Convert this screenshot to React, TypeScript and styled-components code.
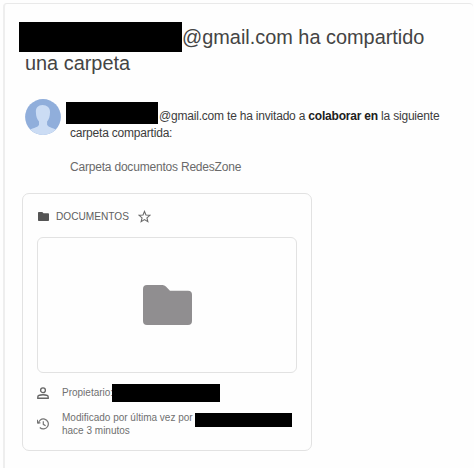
import React from "react";
import styled, { createGlobalStyle } from "styled-components";

const GlobalStyle = createGlobalStyle`
  * { box-sizing: border-box; }
  html, body { margin: 0; background: #fefefe; overflow: hidden; }
  body { font-family: "Liberation Sans", Arial, sans-serif; }
`;

const Message = styled.main`
  display: flex;
  flex-direction: column;
  width: 470px;
  height: 468px;
  margin-left: 3px;
  padding: 22px 0 0 14px;
  border-left: 2px solid #eeeeee;
  border-top: 1px solid #e9e9e9;
  border-top-left-radius: 4px;
  border-top-right-radius: 4px;
  background: #fefefe;
  white-space: nowrap;
`;

const Page = styled.div`
  padding-top: 3px;
  height: 468px;
  overflow: hidden;
`;

const Title = styled.h1`
  margin: -2px 0 0;
  color: #444444;
  font-size: 19.9px;
  font-weight: 400;
  line-height: 26px;
`;

const TitleLine = styled.span<{ $indent?: number }>`
  display: flex;
  align-items: flex-start;
  height: 26px;
  padding-left: ${({ $indent = 0 }) => $indent}px;
`;

const Redaction = styled.span<{ $w: number; $h: number; $top?: number; $gap?: number }>`
  flex: none;
  width: ${({ $w }) => $w}px;
  height: ${({ $h }) => $h}px;
  margin-top: ${({ $top = 0 }) => $top}px;
  margin-left: ${({ $gap = 0 }) => $gap}px;
  background: #000;
`;

const Invitation = styled.section`
  display: flex;
  margin: 23px 0 0 6px;
  height: 94px;
`;

const InvitationText = styled.div`
  margin: 9px 0 0 5px;
  color: #3c3c3c;
  font-size: 12px;
  letter-spacing: -0.2px;
  line-height: 17px;
`;

const Line = styled.div<{ $indent?: number }>`
  display: flex;
  gap: 1px;
  height: 17px;
  padding-left: ${({ $indent = 0 }) => $indent}px;
`;

const Strong = styled.b`
  color: #202020;
`;

const Note = styled.p`
  margin: 17px 0 0 4px;
  color: #6a6a6a;
`;

const Card = styled.section`
  width: 290px;
  height: 258px;
  margin-left: 3px;
  padding: 0 14px;
  border: 1px solid #e2e2e2;
  border-radius: 7px;
`;

const CardHeader = styled.header`
  display: flex;
  align-items: center;
  height: 43px;
  padding-top: 2px;
  color: #606060;
  font-size: 10.15px;
`;

const FolderName = styled.span`
  margin: 0 9px 0 7px;
`;

const Preview = styled.div`
  display: flex;
  align-items: center;
  justify-content: center;
  height: 136px;
  border: 1px solid #e2e2e2;
  border-radius: 6px;
`;

const Detail = styled.div<{ $top: number }>`
  display: flex;
  align-items: center;
  margin-top: ${({ $top }) => $top}px;
  color: #707070;
  font-size: 10px;
  line-height: 13px;
`;

const DetailText = styled.div`
  margin-left: 13px;
`;

const DetailLine = styled.div`
  display: flex;
  align-items: center;
  height: 13px;
`;

const Icon = styled.svg<{ $left?: number }>`
  display: block;
  flex: none;
  margin-left: ${({ $left = 0 }) => $left}px;
`;

const Avatar = () => (
  <Icon width="36" height="36" viewBox="0 0 36 36">
    <defs>
      <clipPath id="avatar"><circle cx="18" cy="18" r="17.9" /></clipPath>
    </defs>
    <g clipPath="url(#avatar)">
      <rect width="36" height="36" fill="#90aedb" />
      <path d="M17.500 6c-4.300 0-7 3-6.600 7.300.1 4.200 1.200 7.200 3.100 9.300v3.100C13 29 6 28.500 3 32.500V36h30v-3.500c-3-4-9.500-3.500-10.900-6.800v-3.100c1.900-2.100 2.800-5.100 2.900-9.300C25.300 9 22 6 17.500 6z" fill="#cbdcf4" />
    </g>
  </Icon>
);

export default function App() {
  return (
    <Page>
      <GlobalStyle />
      <Message>
        <Title>
          <TitleLine>
            <Redaction $w={163} $h={30} $top={-2} />
            <span>@gmail.com ha compartido</span>
          </TitleLine>
          <TitleLine $indent={6}>una carpeta</TitleLine>
        </Title>
        <Invitation>
          <Avatar />
          <InvitationText>
            <Line>
              <Redaction $w={92} $h={22} $top={-6} />
              <span>
                @gmail.com te ha invitado a <Strong>colaborar en</Strong> la siguiente
              </span>
            </Line>
            <Line $indent={4}>carpeta compartida:</Line>
            <Note>Carpeta documentos RedesZone</Note>
          </InvitationText>
        </Invitation>
        <Card>
          <CardHeader>
            <Icon width="11" height="9" viewBox="0 0 11 9" $left={1}>
              <path d="M.8 0h3.500l1.200 1.200h4.700q.8 0 .8.800v6.200q0 .8-.8.800H.8Q0 9 0 8.200V.8Q0 0 .8 0z" fill="#555" />
            </Icon>
            <FolderName>DOCUMENTOS</FolderName>
            <Icon width="13" height="13" viewBox="0 0 24 24">
              <path d="M12 2.500l2.700 6.700 7.300.6-5.500 4.800 1.700 7L12 17.800l-6.200 3.800 1.700-7L2 9.800l7.300-.6z" fill="none" stroke="#686868" strokeWidth="2" />
            </Icon>
          </CardHeader>
          <Preview>
            <Icon width="49" height="40" viewBox="0 0 49 40">
              <path d="M4 0h15.500q2 0 3.400 1.500L27 5.700h18q4 0 4 4V36q0 4-4 4H4q-4 0-4-4V4q0-4 4-4z" fill="#908e90" />
            </Icon>
          </Preview>
          <Detail $top={13}>
            <Icon width="12" height="12" viewBox="0 0 12 12" fill="none" stroke="#666" strokeWidth="1.350">
              <circle cx="6" cy="3.200" r="2.400" />
              <path d="M.8 11.200V9.900C.8 8.500 3.500 7.700 6 7.700s5.200.8 5.200 2.200v1.300z" />
            </Icon>
            <DetailText>
              <DetailLine>
                Propietario:
                <Redaction $w={108} $h={18} $gap={-1} />
              </DetailLine>
            </DetailText>
          </Detail>
          <Detail $top={12}>
            <Icon width="12" height="12" viewBox="0 0 12 12" fill="none" stroke="#747474" strokeWidth="1.200">
              <path d="M1.300 5.800a5 5 0 1 1 1.500 3.700M.4 1.800v3h3M6.300 3.200v3.100l2.300 1.400" />
            </Icon>
            <DetailText>
              <DetailLine>
                Modificado por última vez por
                <Redaction $w={97} $h={14} $gap={2} $top={4} />
              </DetailLine>
              <DetailLine>hace 3 minutos</DetailLine>
            </DetailText>
          </Detail>
        </Card>
      </Message>
    </Page>
  );
}
